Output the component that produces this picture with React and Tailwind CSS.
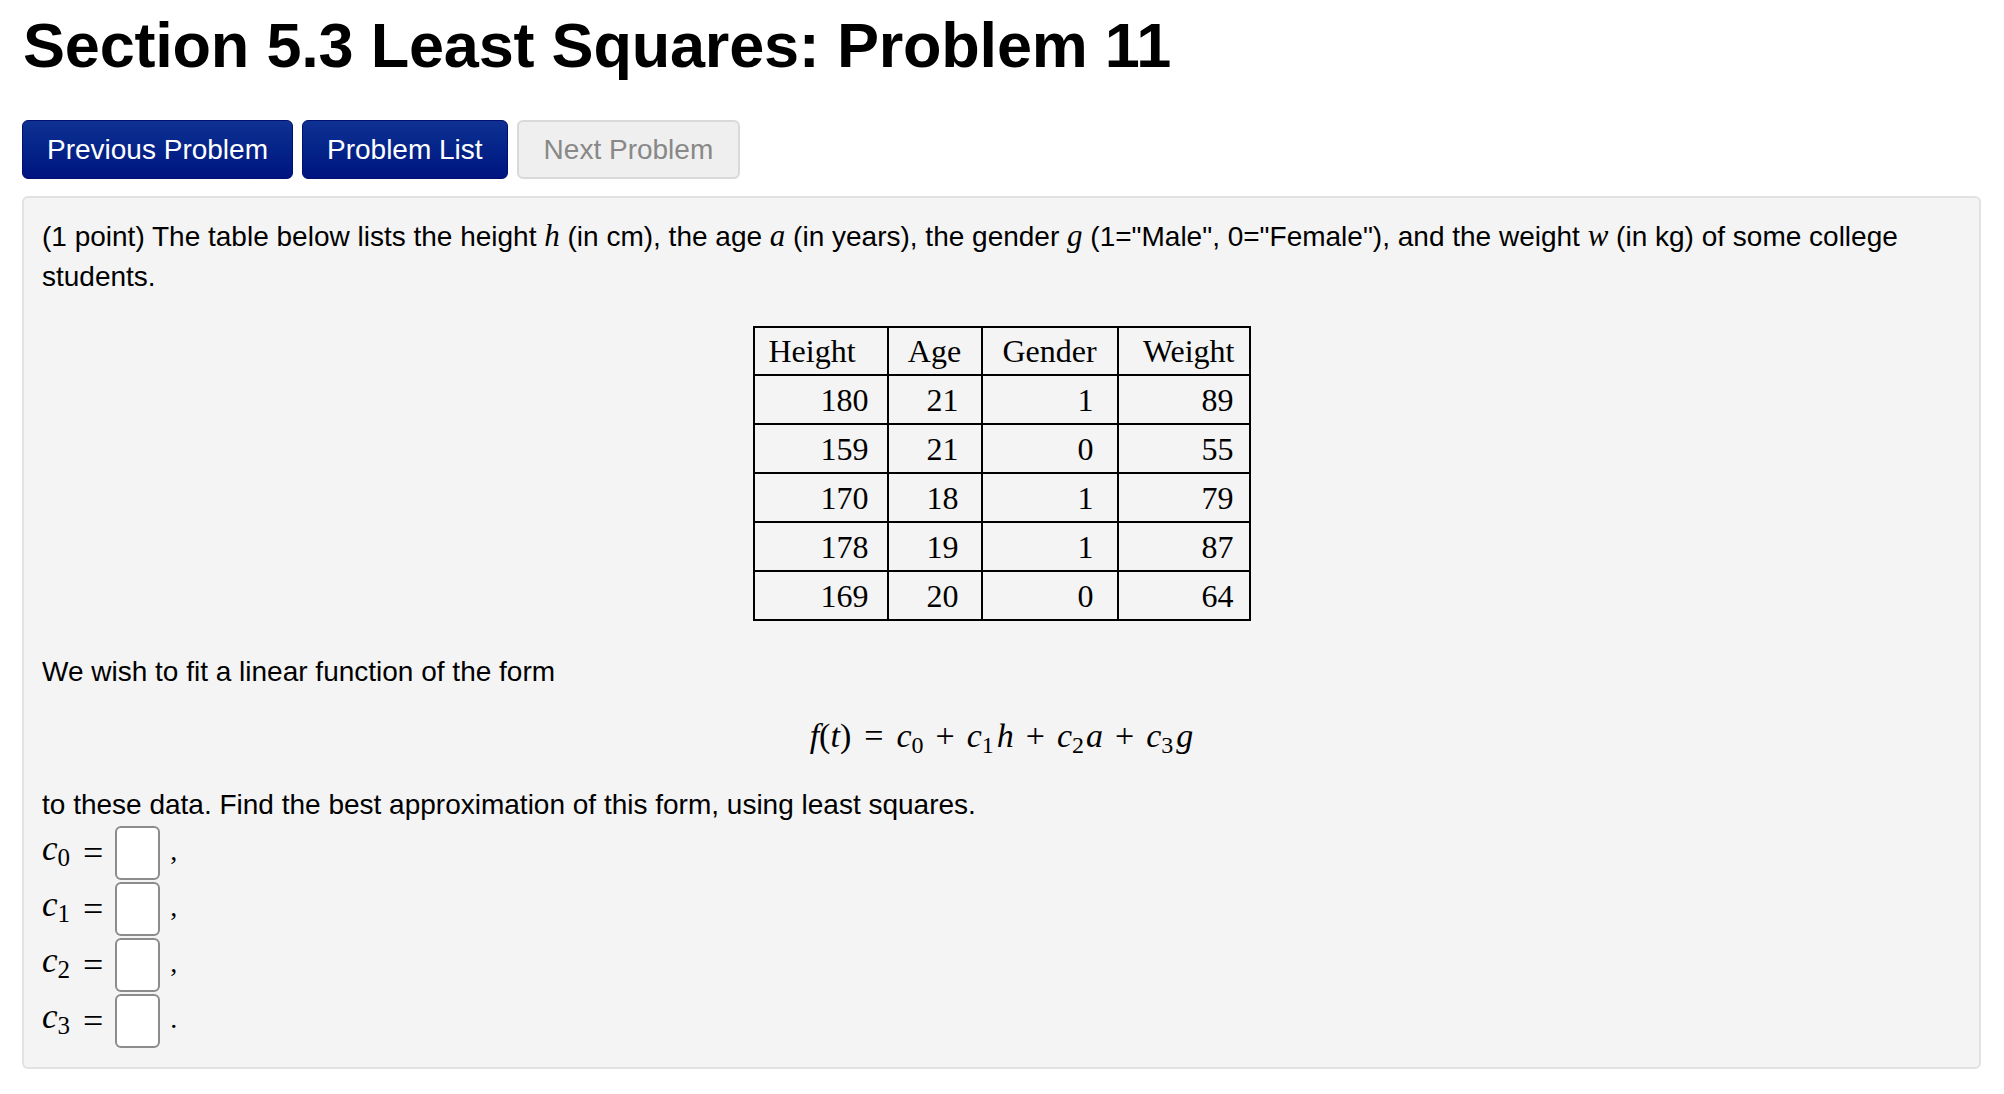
const rows = [
  [180, 21, 1, 89],
  [159, 21, 0, 55],
  [170, 18, 1, 79],
  [178, 19, 1, 87],
  [169, 20, 0, 64],
];

function V({ children }) {
  return <i className="font-['Liberation_Serif',serif] text-[31px]">{children}</i>;
}

function C({ n, size = 'text-[34px]', sub = 'text-[24px]' }) {
  return (
    <span className="font-['Liberation_Serif',serif]">
      <i className={size}>c</i>
      <span className={`${sub} align-[-6px]`}>{n}</span>
    </span>
  );
}

function AnswerRow({ n, last }) {
  return (
    <div className="flex items-center h-[56px]">
      <div className="w-[41px]">
        <C n={n} size="text-[35px]" sub="text-[25px]" />
      </div>
      <span className="font-['Liberation_Serif',serif] text-[36px] leading-none">=</span>
      <input
        type="text"
        className="ml-[12px] w-[45px] h-[54px] bg-white border-2 border-[#8c8c8c] rounded-[6px] outline-none"
      />
      <span className="ml-[10px] font-['Liberation_Serif',serif] text-[28px] self-end mb-[10px]">{last ? '.' : ','}</span>
    </div>
  );
}

export default function App() {
  return (
    <div className="min-h-screen bg-white text-black font-['Liberation_Sans',Arial,sans-serif] pl-[22px] pr-[23px]">
      <h1 className="pt-[14px] pl-[1px] text-[63px] leading-none font-bold tracking-[-0.2px]">
        Section 5.3 Least Squares: Problem 11
      </h1>

      <div className="mt-[43px] flex gap-[9px] text-[28px]">
        <button className="h-[59px] px-[24px] rounded-[6px] text-white bg-gradient-to-b from-[#0f3192] to-[#001380] border border-[#001070]">
          Previous Problem
        </button>
        <button className="h-[59px] px-[24px] rounded-[6px] text-white bg-gradient-to-b from-[#0f3192] to-[#001380] border border-[#001070]">
          Problem List
        </button>
        <button className="h-[59px] px-[25px] rounded-[6px] text-[#888888] bg-[#efefef] border-2 border-[#d9d9d9]">
          Next Problem
        </button>
      </div>

      <div className="mt-[17px] bg-[#f4f4f4] border-2 border-[#e2e2e2] rounded-[6px] pl-[18px] pr-[18px] pt-[18px] pb-[18px] text-[28px] leading-[40px]">
        <p>
          (1 point) The table below lists the height <V>h</V> (in cm), the age <V>a</V> (in years), the gender{' '}
          <V>g</V> (1="Male", 0="Female"), and the weight <V>w</V> (in kg) of some college students.
        </p>

        <div className="flex justify-center mt-[29px]">
          <table className="table-fixed border-collapse border-2 border-black font-['Liberation_Serif',serif] text-[32px] leading-none">
            <colgroup>
              <col className="w-[134px]" />
              <col className="w-[94px]" />
              <col className="w-[136px]" />
              <col className="w-[132px]" />
            </colgroup>
            <thead>
              <tr className="h-[48px]">
                <th className="border-2 border-black font-normal text-left pl-[14px]">Height</th>
                <th className="border-2 border-black font-normal text-center">Age</th>
                <th className="border-2 border-black font-normal text-center">Gender</th>
                <th className="border-2 border-black font-normal text-right pr-[14px]">Weight</th>
              </tr>
            </thead>
            <tbody>
              {rows.map((r, i) => (
                <tr key={i} className="h-[49px]">
                  <td className="border-2 border-black text-right pr-[18px]">{r[0]}</td>
                  <td className="border-2 border-black text-right pr-[22px]">{r[1]}</td>
                  <td className="border-2 border-black text-right pr-[23px]">{r[2]}</td>
                  <td className="border-2 border-black text-right pr-[15px]">{r[3]}</td>
                </tr>
              ))}
            </tbody>
          </table>
        </div>

        <p className="mt-[31px]">We wish to fit a linear function of the form</p>

        <div className="mt-[24px] flex justify-center font-['Liberation_Serif',serif] text-[34px] leading-[40px]">
          <span>
            <i>f</i>(<i>t</i>)<span className="mx-[13px]">=</span>
            <C n={0} />
            <span className="mx-[12px]">+</span>
            <C n={1} />
            <i className="ml-[3px]">h</i>
            <span className="mx-[12px]">+</span>
            <C n={2} />
            <i className="ml-[2px]">a</i>
            <span className="mx-[12px]">+</span>
            <C n={3} />
            <i className="ml-[3px]">g</i>
          </span>
        </div>

        <p className="mt-[20px]">to these data. Find the best approximation of this form, using least squares.</p>

        <div className="flex flex-col">
          <AnswerRow n={0} />
          <AnswerRow n={1} />
          <AnswerRow n={2} />
          <AnswerRow n={3} last />
        </div>
      </div>
    </div>
  );
}
